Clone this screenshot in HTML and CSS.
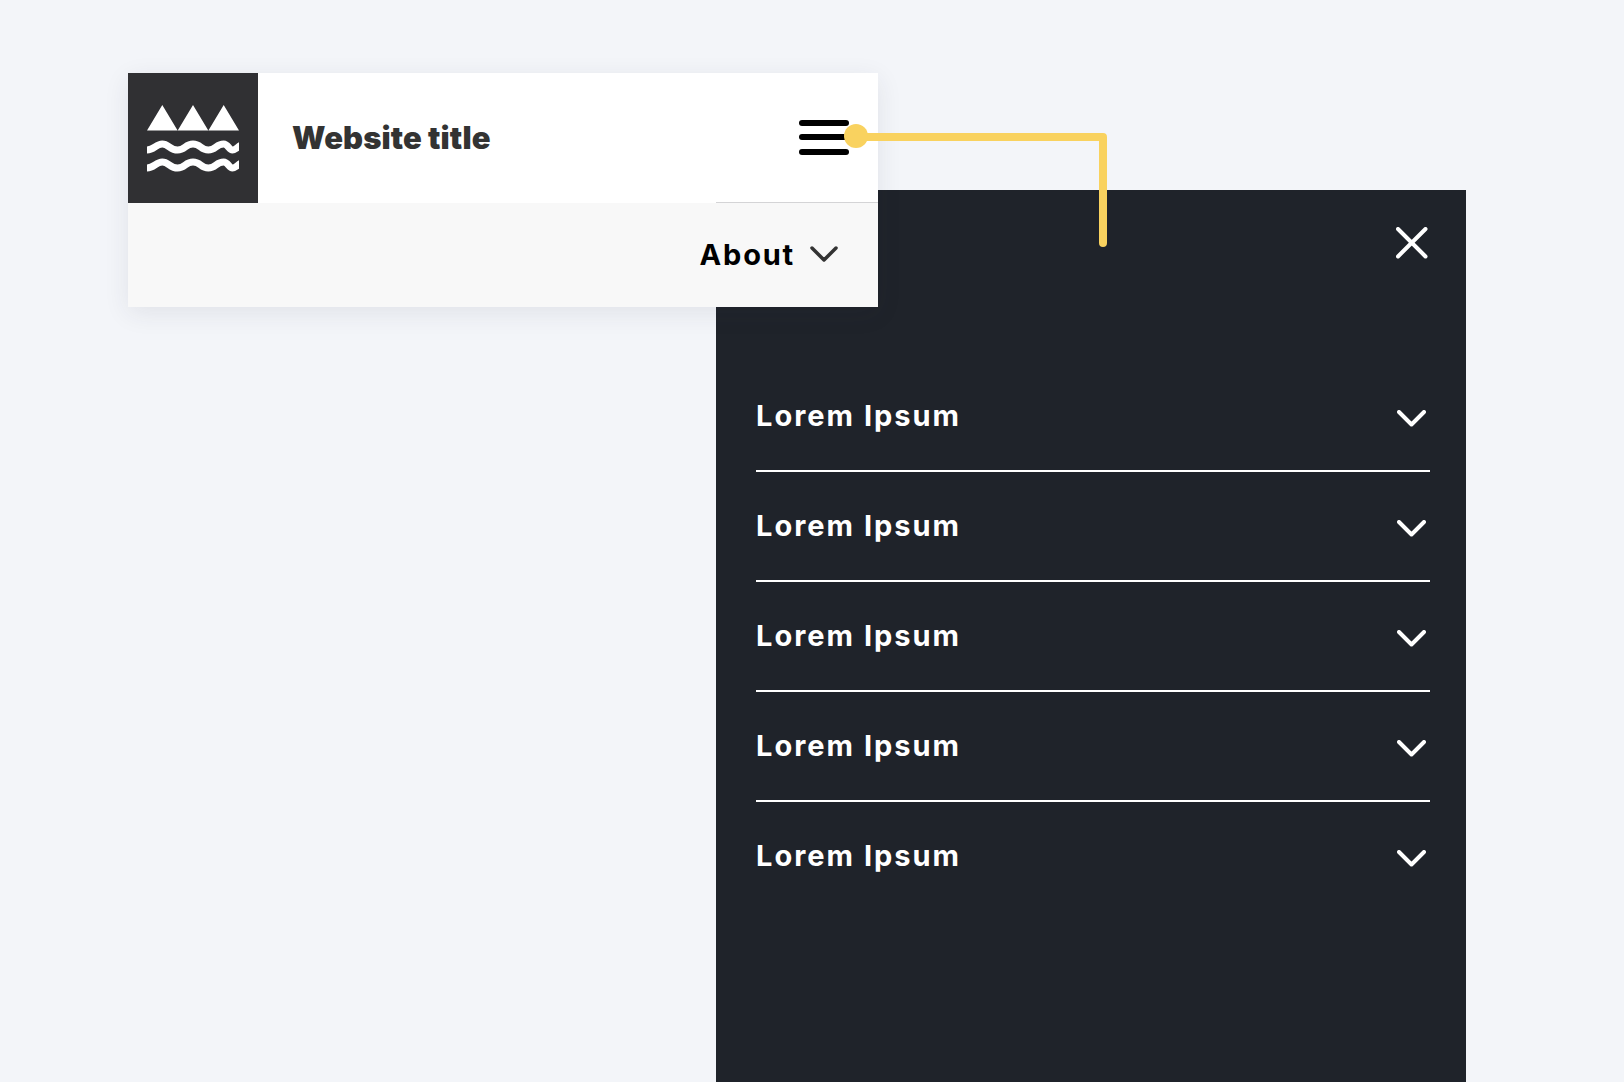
FILE: index.html
```html
<!DOCTYPE html>
<html lang="en">
<head>
  <meta charset="UTF-8" />
  <title>Website title</title>
  <link rel="stylesheet" href="styles.css">
</head>
<body>

  <div class="stage">

    <!-- Site header -->
    <div class="site-head">
      <div class="top-bar">
        <div class="logo">
          <svg width="130" height="130" viewBox="0 0 130 130">
            <clipPath id="wave-clip"><rect x="19" y="60" width="92" height="50"/></clipPath>
            <path class="logo-peaks" d="M19 57.500 34.300 32 49.600 57.500ZM49.700 57.500 65 32 80.300 57.500ZM80.400 57.500 95.700 32 111 57.500Z"/>
            <g clip-path="url(#wave-clip)">
              <path class="logo-wave" d="M10 72C13 72 15 77 19 77 26 77 28 71 34.300 71S42 77 49.600 77 57.300 71 65 71 72.600 77 80.300 77 88 71 95.700 71C100 71 101 77 104.500 77 108 77 111 72 116 71"/>
              <path class="logo-wave" d="M10 90C13 90 15 95 19 95 26 95 28 89 34.300 89S42 95 49.600 95 57.300 89 65 89 72.600 95 80.300 95 88 89 95.700 89C100 89 101 95 104.500 95 108 95 111 90 116 89"/>
            </g>
          </svg>
        </div>
        <div class="site-title">Website title</div>
        <div class="burger"><span></span><span></span><span></span></div>
      </div>
      <div class="sub-bar">
        <span class="about">About</span>
        <svg class="chev-dark" width="28" height="16" viewBox="0 0 28 16"><path d="M2 2 14 14 26 2"/></svg>
      </div>
    </div>

    <!-- Open menu -->
    <div class="menu-panel">
      <div class="close-row">
        <svg class="close-x" width="32" height="32" viewBox="0 0 32 32"><path d="M2 2 29.500 29.500M29.500 2 2 29.500"/></svg>
      </div>
      <div class="menu-list">
        <div class="menu-row"><span>Lorem Ipsum</span><svg class="chev" width="29" height="17" viewBox="0 0 29 17"><path d="M2 2 14.500 14.500 27 2"/></svg></div>
        <div class="menu-row"><span>Lorem Ipsum</span><svg class="chev" width="29" height="17" viewBox="0 0 29 17"><path d="M2 2 14.500 14.500 27 2"/></svg></div>
        <div class="menu-row"><span>Lorem Ipsum</span><svg class="chev" width="29" height="17" viewBox="0 0 29 17"><path d="M2 2 14.500 14.500 27 2"/></svg></div>
        <div class="menu-row"><span>Lorem Ipsum</span><svg class="chev" width="29" height="17" viewBox="0 0 29 17"><path d="M2 2 14.500 14.500 27 2"/></svg></div>
        <div class="menu-row"><span>Lorem Ipsum</span><svg class="chev" width="29" height="17" viewBox="0 0 29 17"><path d="M2 2 14.500 14.500 27 2"/></svg></div>
      </div>
    </div>

    <!-- Annotation from the burger to the panel -->
    <svg class="callout" width="280" height="150" viewBox="0 0 280 150">
      <path d="M22 33H269V139"/>
      <circle cx="22" cy="32" r="12"/>
    </svg>

  </div>

</body>
</html>
```

FILE: styles.css
```css
:root {
  --bg: #f3f5f9;
  --dark: #1f232a;
  --logo: #303033;
  --yellow: #f9d25f;
}

* {
  margin: 0;
  padding: 0;
  box-sizing: border-box;
}

body {
  background: var(--bg);
  font-family: 'Inter', sans-serif;
  overflow: hidden;
}

.stage {
  position: relative;
  display: grid;
  grid-template-columns: 750px;
  align-items: start;
  height: 1082px;
  padding: 73px 0 0 128px;
  overflow: hidden;
}

.site-head,
.menu-panel {
  grid-column: 1;
  grid-row: 1;
}

.site-head {
  position: relative;
  z-index: 2;
  box-shadow: 0 6px 24px rgba(40, 44, 70, 0.09);
}

.top-bar {
  display: flex;
  align-items: center;
  height: 130px;
  background: #fff;
  padding-right: 29px;
}

.logo {
  width: 130px;
  height: 130px;
  background: var(--logo);
}

.logo svg {
  display: block;
}

.logo-peaks {
  fill: #fff;
}

.logo-wave {
  fill: none;
  stroke: #fff;
  stroke-width: 7;
}

.site-title {
  flex: 1;
  margin: -2px 0 0 34px;
  font-size: 31px;
  font-weight: 900;
  letter-spacing: 0.1px;
  color: #333;
}

.burger {
  display: flex;
  flex-direction: column;
  gap: 8.500px;
  width: 50px;
  margin-top: -2px;
}

.burger span {
  height: 6px;
  background: #000;
  border-radius: 3px;
}

.sub-bar {
  position: relative;
  display: flex;
  justify-content: flex-end;
  align-items: center;
  gap: 15px;
  height: 104px;
  padding: 0 40px 2px 0;
  background: #f8f8f8;
}

.sub-bar::before {
  content: '';
  position: absolute;
  top: -1px;
  right: 0;
  width: 162px;
  height: 1px;
  background: #d4d4d6;
}

.about {
  font-size: 29px;
  font-weight: 700;
  letter-spacing: 1.800px;
  color: #000;
}

.chev-dark path {
  fill: none;
  stroke: #333;
  stroke-width: 3.500;
  stroke-linecap: round;
  stroke-linejoin: round;
}

.menu-panel {
  width: 750px;
  height: 892px;
  margin: 117px 0 0 588px;
  padding: 37px 36px 0 40px;
  background: var(--dark);
  color: #fff;
}

.close-row {
  display: flex;
  justify-content: flex-end;
  padding-right: 2px;
}

.close-x path {
  fill: none;
  stroke: #fff;
  stroke-width: 4;
  stroke-linecap: round;
}

.menu-list {
  margin-top: 103px;
}

.menu-row {
  display: flex;
  justify-content: space-between;
  align-items: center;
  height: 110px;
  padding-right: 4px;
  border-bottom: 2px solid #fff;
  font-size: 29px;
  font-weight: 700;
  letter-spacing: 2px;
}

.menu-row span {
  margin-top: -2px;
}

.menu-row:last-child {
  border-bottom-color: transparent;
}

.chev {
  margin-top: 4px;
}

.chev path {
  fill: none;
  stroke: #fff;
  stroke-width: 4;
  stroke-linecap: round;
  stroke-linejoin: round;
}

.callout {
  position: absolute;
  left: 834px;
  top: 104px;
  z-index: 3;
}

.callout path {
  fill: none;
  stroke: var(--yellow);
  stroke-width: 8;
  stroke-linecap: round;
  stroke-linejoin: round;
}

.callout circle {
  fill: var(--yellow);
}
```
